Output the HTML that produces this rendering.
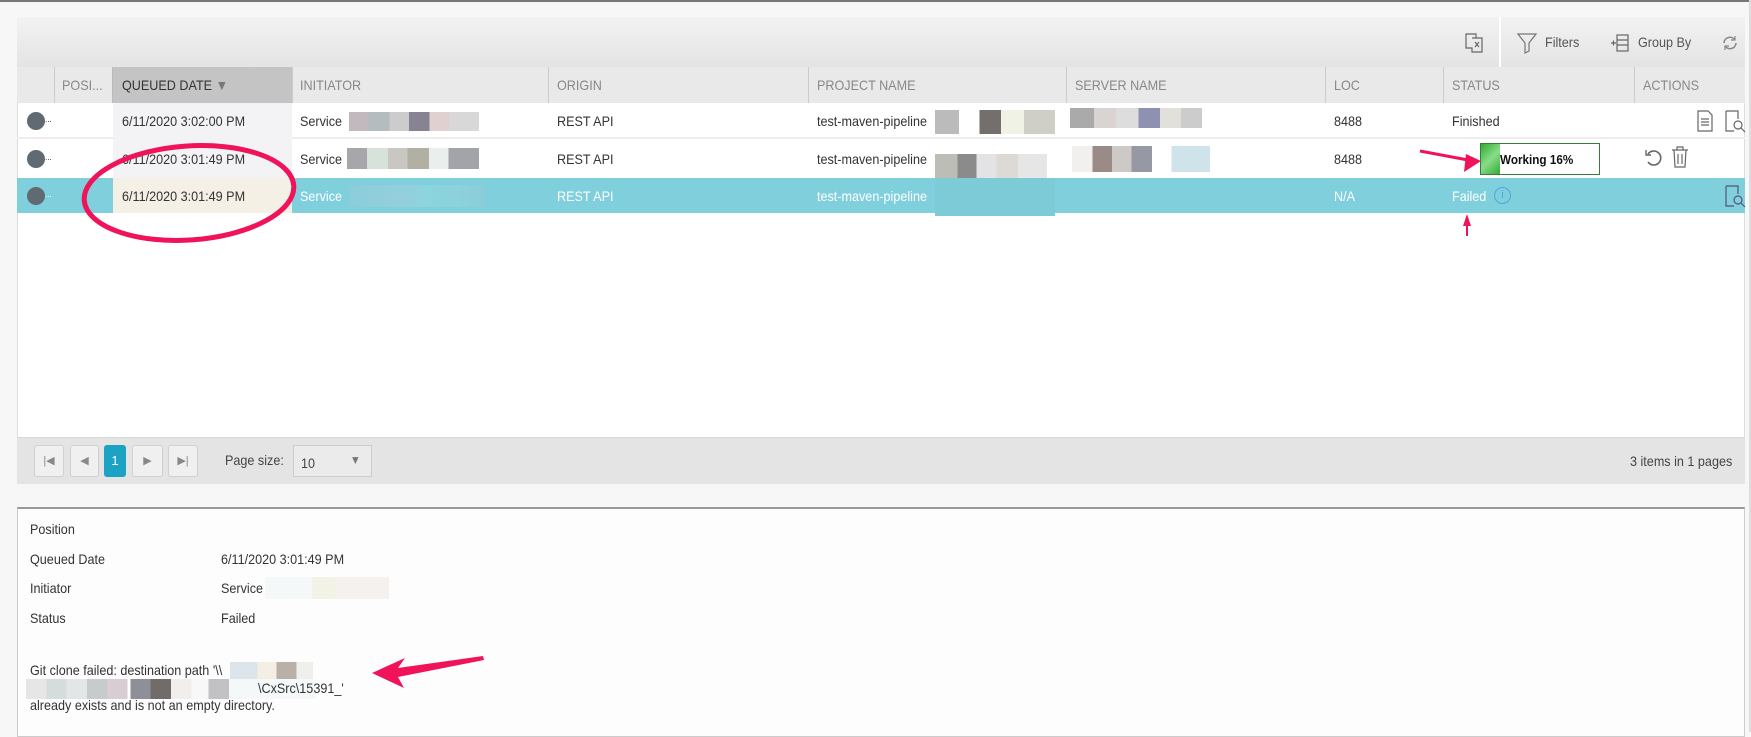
<!DOCTYPE html>
<html><head><meta charset="utf-8"><style>
*{box-sizing:border-box;margin:0;padding:0}
body{width:1751px;height:732px;background:#f7f7f7;font-family:"Liberation Sans",sans-serif;font-size:14px;color:#333;position:relative;overflow:hidden}
.abs{position:absolute}
.t{position:absolute;white-space:nowrap;transform:scaleX(.9);transform-origin:left center}
.b{position:absolute}
</style></head><body>
<div class="abs" style="left:0;top:0;width:1751px;height:2px;background:#777"></div>
<div class="abs" style="left:1749px;top:0;width:2px;height:732px;background:#ddd"></div>
<div class="abs" style="left:17px;top:17px;width:1728px;height:467px;background:#fff;border:1px solid #ddd"></div>
<div class="abs" style="left:17px;top:17px;width:1728px;height:50px;background:linear-gradient(#f2f2f2,#e4e4e4)"></div>
<div class="abs" style="left:1499px;top:17px;width:2px;height:50px;background:#fff"></div>
<svg class="abs" style="left:1462px;top:31px" width="24" height="24" viewBox="0 0 24 24" fill="none" stroke="#666" stroke-width="1.2"><path d="M6 3h8v4h6v14H10v-4H4V3z M10 7h10"/><path d="M13 11l4 5M17 11l-4 5"/></svg>
<svg class="abs" style="left:1517px;top:32px" width="20" height="22" viewBox="0 0 20 22" fill="none" stroke="#777" stroke-width="1.2"><path d="M1 2h18l-7 9v8l-4 2V11z"/></svg>
<div class="t" style="left:1545px;top:34px;color:#555">Filters</div>
<svg class="abs" style="left:1610px;top:33px" width="20" height="20" viewBox="0 0 20 20" fill="none" stroke="#666" stroke-width="1.2"><rect x="7" y="2" width="11" height="16"/><path d="M7 7h11M7 12h11M1 10h5M3.5 7.5v5"/></svg>
<div class="t" style="left:1638px;top:34px;color:#555">Group By</div>
<svg class="abs" style="left:1721px;top:34px" width="18" height="18" viewBox="0 0 18 18" fill="none" stroke="#888" stroke-width="1.6"><path d="M15 9a6 6 0 0 1-11 3M3 9a6 6 0 0 1 11-3"/><path d="M14 2v4h-4M4 16v-4h4" stroke-width="1.2"/></svg>
<div class="abs" style="left:17px;top:67px;width:1728px;height:36px;background:#e9e9e9"></div>
<div class="abs" style="left:112px;top:67px;width:180px;height:36px;background:#c4c4c4"></div>
<div class="abs" style="left:54px;top:67px;width:1px;height:36px;background:#ccc"></div>
<div class="abs" style="left:112px;top:67px;width:1px;height:36px;background:#bbb"></div>
<div class="abs" style="left:292px;top:67px;width:1px;height:36px;background:#ccc"></div>
<div class="abs" style="left:548px;top:67px;width:1px;height:36px;background:#ccc"></div>
<div class="abs" style="left:808px;top:67px;width:1px;height:36px;background:#ccc"></div>
<div class="abs" style="left:1066px;top:67px;width:1px;height:36px;background:#ccc"></div>
<div class="abs" style="left:1325px;top:67px;width:1px;height:36px;background:#ccc"></div>
<div class="abs" style="left:1443px;top:67px;width:1px;height:36px;background:#ccc"></div>
<div class="abs" style="left:1634px;top:67px;width:1px;height:36px;background:#ccc"></div>
<div class="t" style="left:62px;top:77px;color:#888">POSI...</div>
<div class="t" style="left:122px;top:77px;color:#333">QUEUED DATE <span style="color:#777">▼</span></div>
<div class="t" style="left:300px;top:77px;color:#888">INITIATOR</div>
<div class="t" style="left:557px;top:77px;color:#888">ORIGIN</div>
<div class="t" style="left:817px;top:77px;color:#888">PROJECT NAME</div>
<div class="t" style="left:1075px;top:77px;color:#888">SERVER NAME</div>
<div class="t" style="left:1334px;top:77px;color:#888">LOC</div>
<div class="t" style="left:1452px;top:77px;color:#888">STATUS</div>
<div class="t" style="left:1643px;top:77px;color:#888">ACTIONS</div>
<div class="abs" style="left:17px;top:137px;width:1728px;height:2px;background:#eee"></div>
<div class="abs" style="left:113px;top:103px;width:179px;height:75px;background:#f3f3f5"></div>
<div class="abs" style="left:17px;top:178px;width:1728px;height:35px;background:#80cfdd"></div>
<div class="abs" style="left:113px;top:178px;width:179px;height:35px;background:#f5f0e6"></div>
<div class="abs" style="left:27px;top:112px;width:18px;height:18px;border-radius:50%;background:#5f6a73"></div><div class="t" style="left:45px;top:114px;font-size:9px">...</div>
<div class="abs" style="left:27px;top:150px;width:18px;height:18px;border-radius:50%;background:#5f6a73"></div><div class="t" style="left:45px;top:152px;font-size:9px">...</div>
<div class="abs" style="left:27px;top:187px;width:18px;height:18px;border-radius:50%;background:#5f6a73"></div><div class="t" style="left:45px;top:189px;font-size:9px;color:#fff">...</div>
<div class="t" style="left:122px;top:113px">6/11/2020 3:02:00 PM</div>
<div class="t" style="left:122px;top:151px">6/11/2020 3:01:49 PM</div>
<div class="t" style="left:122px;top:188px">6/11/2020 3:01:49 PM</div>
<div class="t" style="left:300px;top:113px">Service</div>
<div class="t" style="left:300px;top:151px">Service</div>
<div class="t" style="left:300px;top:188px;color:#fff">Service</div>
<div class="b" style="left:349px;top:112px;width:130px;height:19px;background:linear-gradient(90deg,#c2b9bf 0 15%,#b4bcc0 15% 31%,#ccc 31% 46%,#878393 46% 62%,#e0d0d0 62% 77%,#d8d8d8 77%)"></div>
<div class="b" style="left:347px;top:148px;width:132px;height:21px;background:linear-gradient(90deg,#a8a6aa 0 15%,#d7e2da 15% 31%,#c8c7c2 31% 46%,#b1b0a2 46% 62%,#eaeeec 62% 77%,#a3a3aa 77%)"></div>
<div class="b" style="left:349px;top:185px;width:135px;height:22px;background:linear-gradient(90deg,#8ccddb,#94cfdc 40%,#8bd5de 60%,#8ccdd8)"></div>
<div class="t" style="left:557px;top:113px">REST API</div>
<div class="t" style="left:557px;top:151px">REST API</div>
<div class="t" style="left:557px;top:188px;color:#fff">REST API</div>
<div class="t" style="left:817px;top:113px">test-maven-pipeline</div>
<div class="t" style="left:817px;top:151px">test-maven-pipeline</div>
<div class="t" style="left:817px;top:188px;color:#fff">test-maven-pipeline</div>
<div class="b" style="left:935px;top:110px;width:120px;height:24px;background:linear-gradient(90deg,#bbb 0 20%,#fff 20% 37%,#746e6c 37% 55%,#f0f2e6 55% 74%,#d0cfc7 74%)"></div>
<div class="b" style="left:935px;top:154px;width:112px;height:24px;background:linear-gradient(90deg,#bdbdb8 0 20%,#8b8b8b 20% 37%,#e3e3e6 37% 55%,#ddd9d4 55% 74%,#e6e6e6 74%)"></div>
<div class="b" style="left:935px;top:178px;width:120px;height:38px;background:#7ecbd8"></div>
<div class="b" style="left:1070px;top:108px;width:132px;height:20px;background:linear-gradient(90deg,#aaa 0 18%,#d9d4d2 18% 35%,#ddd 35% 52%,#8e92b0 52% 68%,#e2e0db 68% 84%,#ccc 84%)"></div>
<div class="b" style="left:1072px;top:146px;width:138px;height:26px;background:linear-gradient(90deg,#f2f0ee 0 15%,#9a8b86 15% 29%,#ccc9c7 29% 43%,#9699a4 43% 58%,#fff 58% 72%,#cfe3ea 72%)"></div>
<div class="t" style="left:1334px;top:113px">8488</div>
<div class="t" style="left:1334px;top:151px">8488</div>
<div class="t" style="left:1334px;top:188px;color:#fff">N/A</div>
<div class="t" style="left:1452px;top:113px">Finished</div>
<div class="abs" style="left:1480px;top:143px;width:120px;height:32px;border:1px solid #3a7a3a;background:#fff"></div>
<div class="abs" style="left:1481px;top:144px;width:19px;height:30px;background:linear-gradient(135deg,#3a3,#8d8,#3a3)"></div>
<div class="t" style="left:1500px;top:152px;font-weight:bold;color:#111;font-size:13px">Working 16%</div>
<div class="t" style="left:1452px;top:188px;color:#fff">Failed</div>
<div class="abs" style="left:1494px;top:187px;width:17px;height:17px;border-radius:50%;border:1.5px solid #4aa8e0;color:#4aa8e0;font-size:11px;text-align:center;line-height:14px">i</div>
<svg class="abs" style="left:1696px;top:110px" width="18" height="22" viewBox="0 0 18 22" fill="none" stroke="#666" stroke-width="1.2"><path d="M2 1h10l4 4v16H2z M5 9h8M5 12h8M5 15h8"/></svg>
<svg class="abs" style="left:1724px;top:110px" width="22" height="24" viewBox="0 0 22 24" fill="none" stroke="#666" stroke-width="1.2"><path d="M2 1h12v8M2 1v20h8"/><circle cx="14" cy="15" r="4"/><path d="M17 18l4 4"/></svg>
<svg class="abs" style="left:1644px;top:148px" width="20" height="20" viewBox="0 0 20 20" fill="none" stroke="#666" stroke-width="1.6"><path d="M4 6a7 7 0 1 1 0 8"/><path d="M2 2v5h5" stroke-width="1.4"/></svg>
<svg class="abs" style="left:1670px;top:146px" width="20" height="22" viewBox="0 0 20 22" fill="none" stroke="#666" stroke-width="1.2"><path d="M2 4h16M7 4V1h6v3M4 4l1 17h10l1-17M8 8v10M12 8v10"/></svg>
<svg class="abs" style="left:1724px;top:185px" width="22" height="24" viewBox="0 0 22 24" fill="none" stroke="#557" stroke-width="1.2"><path d="M2 1h12v8M2 1v20h8"/><circle cx="14" cy="15" r="4"/><path d="M17 18l4 4"/></svg>
<div class="abs" style="left:17px;top:437px;width:1728px;height:47px;background:#e4e4e4;border-top:1px solid #d8d8d8"></div>
<div class="abs" style="left:34px;top:445px;width:30px;height:32px;background:#f0f0f0;border:1px solid #d0d0d0;border-radius:3px;color:#888;text-align:center;line-height:30px;font-size:11px">|◀</div>
<div class="abs" style="left:70px;top:445px;width:29px;height:32px;background:#f0f0f0;border:1px solid #d0d0d0;border-radius:3px;color:#888;text-align:center;line-height:30px;font-size:11px">◀</div>
<div class="abs" style="left:104px;top:445px;width:22px;height:32px;background:#1ca3c4;border-radius:3px;color:#fff;text-align:center;line-height:32px;font-size:13px">1</div>
<div class="abs" style="left:132px;top:445px;width:31px;height:32px;background:#f0f0f0;border:1px solid #d0d0d0;border-radius:3px;color:#888;text-align:center;line-height:30px;font-size:11px">▶</div>
<div class="abs" style="left:168px;top:445px;width:30px;height:32px;background:#f0f0f0;border:1px solid #d0d0d0;border-radius:3px;color:#888;text-align:center;line-height:30px;font-size:11px">▶|</div>
<div class="t" style="left:225px;top:452px;color:#444">Page size:</div>
<div class="abs" style="left:293px;top:445px;width:79px;height:32px;background:#ebebeb;border:1px solid #ccc"></div>
<div class="t" style="left:301px;top:455px;color:#444">10</div>
<div class="t" style="left:350px;top:453px;color:#777;font-size:12px">▼</div>
<div class="t" style="left:1630px;top:453px;color:#444">3 items in 1 pages</div>
<div class="abs" style="left:17px;top:507px;width:1728px;height:230px;background:#fdfdfd;border:1px solid #ccc;border-top:2px solid #999"></div>
<div class="t" style="left:30px;top:521px">Position</div>
<div class="t" style="left:30px;top:551px">Queued Date</div>
<div class="t" style="left:221px;top:551px">6/11/2020 3:01:49 PM</div>
<div class="t" style="left:30px;top:580px">Initiator</div>
<div class="t" style="left:221px;top:580px">Service</div>
<div class="b" style="left:265px;top:577px;width:124px;height:22px;background:linear-gradient(90deg,#f4f8f8 0 38%,#f3f2e6 38% 57%,#f4f1ef 57%)"></div>
<div class="t" style="left:30px;top:610px">Status</div>
<div class="t" style="left:221px;top:610px">Failed</div>
<div class="t" style="left:30px;top:662px">Git clone failed: destination path '\\</div>
<div class="b" style="left:230px;top:662px;width:83px;height:17px;background:linear-gradient(90deg,#dce6ea 0 33%,#f4eee4 33% 56%,#bbb0a8 56% 80%,#efefec 80%)"></div>
<div class="b" style="left:26px;top:679px;width:290px;height:20px;background:linear-gradient(90deg,#e6e6e6 0 7%,#d4dcdc 7% 14%,#e3e6e6 14% 21%,#c6cccc 21% 28%,#d8cdd2 28% 35%,#fff 35% 36%,#8e9099 36% 43%,#716c6a 43% 50%,#f1eeec 50% 57%,#f8f8f8 57% 63%,#c2c2c5 63% 70%,#f5f8f8 70%)"></div>
<div class="t" style="left:258px;top:680px">\CxSrc\15391_'</div>
<div class="t" style="left:30px;top:697px">already exists and is not an empty directory.</div>
<svg class="abs" style="left:0;top:0" width="1751" height="732">
<ellipse cx="189" cy="193" rx="105" ry="47" fill="none" stroke="#f0135a" stroke-width="5" transform="rotate(-4 189 193)"/>
<path d="M1420 151 L1468 160" stroke="#f0135a" stroke-width="3"/>
<path d="M1466 154 L1481 161 L1464 172 Z" fill="#f0135a"/>
<path d="M1467 214 L1463 226 L1471 226 Z" fill="#f0135a"/>
<path d="M1467 224 L1467 236" stroke="#f0135a" stroke-width="2"/>
<path d="M483 656 L398 668 L405 658 L372 673 L404 688 L398 677 L484 660 Z" fill="#f0135a"/>
</svg>
</body></html>
